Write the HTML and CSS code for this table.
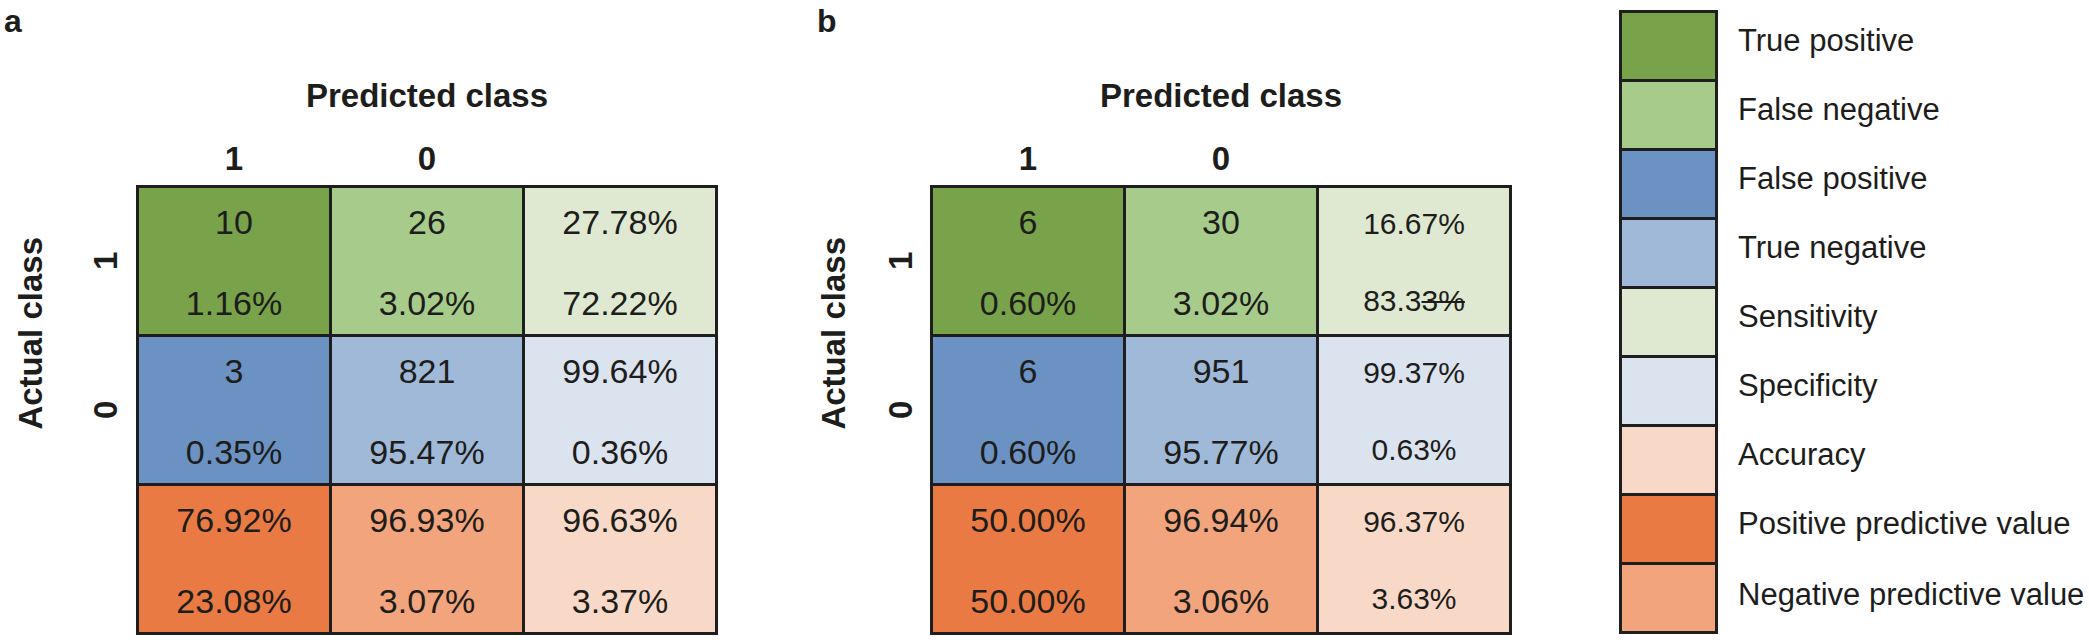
FILE: index.html
```html
<!DOCTYPE html>
<html lang="en">
<head>
<meta charset="utf-8">
<title>Confusion matrices</title>
<link rel="stylesheet" href="styles.css">
</head>
<body>
<div class="figure">
  <section class="panel panel-a">
    <div class="tag">a</div>
    <div class="chart">
      <div class="x-title">Predicted class</div>
      <div class="col-labels"><span>1</span><span>0</span><span></span></div>
      <div class="y-title"><span class="vtext">Actual class</span></div>
      <div class="row-labels"><span class="vtext">1</span><span class="vtext">0</span><span></span></div>
      <div class="matrix">
        <div class="cell tp"><span>10</span><span>1.16%</span></div>
        <div class="cell fn"><span>26</span><span>3.02%</span></div>
        <div class="cell sens"><span>27.78%</span><span>72.22%</span></div>
        <div class="cell fp"><span>3</span><span>0.35%</span></div>
        <div class="cell tn"><span>821</span><span>95.47%</span></div>
        <div class="cell spec"><span>99.64%</span><span>0.36%</span></div>
        <div class="cell ppv"><span>76.92%</span><span>23.08%</span></div>
        <div class="cell npv"><span>96.93%</span><span>3.07%</span></div>
        <div class="cell acc"><span>96.63%</span><span>3.37%</span></div>
      </div>
    </div>
  </section>

  <section class="panel panel-b">
    <div class="tag">b</div>
    <div class="chart">
      <div class="x-title">Predicted class</div>
      <div class="col-labels"><span>1</span><span>0</span><span></span></div>
      <div class="y-title"><span class="vtext">Actual class</span></div>
      <div class="row-labels"><span class="vtext">1</span><span class="vtext">0</span><span></span></div>
      <div class="matrix">
        <div class="cell tp"><span>6</span><span>0.60%</span></div>
        <div class="cell fn"><span>30</span><span>3.02%</span></div>
        <div class="cell sens small"><span>16.67%</span><span>83.3<span class="strike">3%</span></span></div>
        <div class="cell fp"><span>6</span><span>0.60%</span></div>
        <div class="cell tn"><span>951</span><span>95.77%</span></div>
        <div class="cell spec small"><span>99.37%</span><span>0.63%</span></div>
        <div class="cell ppv"><span>50.00%</span><span>50.00%</span></div>
        <div class="cell npv"><span>96.94%</span><span>3.06%</span></div>
        <div class="cell acc small"><span>96.37%</span><span>3.63%</span></div>
      </div>
    </div>
  </section>

  <aside class="legend">
    <div class="legend-item"><span class="swatch tp"></span><span class="legend-label">True positive</span></div>
    <div class="legend-item"><span class="swatch fn"></span><span class="legend-label">False negative</span></div>
    <div class="legend-item"><span class="swatch fp"></span><span class="legend-label">False positive</span></div>
    <div class="legend-item"><span class="swatch tn"></span><span class="legend-label">True negative</span></div>
    <div class="legend-item"><span class="swatch sens"></span><span class="legend-label">Sensitivity</span></div>
    <div class="legend-item"><span class="swatch spec"></span><span class="legend-label">Specificity</span></div>
    <div class="legend-item"><span class="swatch acc"></span><span class="legend-label">Accuracy</span></div>
    <div class="legend-item"><span class="swatch ppv"></span><span class="legend-label">Positive predictive value</span></div>
    <div class="legend-item last"><span class="swatch npv"></span><span class="legend-label">Negative predictive value</span></div>
  </aside>
</div>
</body>
</html>
```

FILE: styles.css
```css
html, body {
  margin: 0;
  padding: 0;
  background: #ffffff;
}

body {
  width: 2089px;
  height: 643px;
  overflow: hidden;
  font-family: "Liberation Sans", Arial, sans-serif;
  color: #1d1d1b;
}

.figure {
  display: flex;
  align-items: flex-start;
}

.panel {
  display: flex;
  flex-direction: column;
  padding-top: 5px;
}

.panel-b {
  margin-left: 99px;
}

.tag {
  font-weight: 700;
  font-size: 32px;
  line-height: 32px;
  height: 32px;
}

.panel-a .tag {
  margin-left: 4px;
}

.chart {
  display: grid;
  grid-template-columns: auto auto auto;
  grid-template-areas:
    ".  .  xt"
    ".  .  xl"
    "yt rl mx";
  margin-top: 42px;
}

.panel-a .chart {
  margin-left: 14px;
}

.x-title {
  grid-area: xt;
  font-weight: 700;
  font-size: 33px;
  line-height: 33px;
  text-align: center;
  margin-bottom: 30px;
}

.col-labels {
  grid-area: xl;
  display: grid;
  grid-template-columns: 190px 190px 190px;
  column-gap: 3px;
  padding: 0 3px;
  font-weight: 700;
  font-size: 33px;
  line-height: 33px;
  text-align: center;
  margin-bottom: 10px;
}

.vtext {
  writing-mode: vertical-rl;
  transform: rotate(180deg);
  font-weight: 700;
  font-size: 33px;
  line-height: 33px;
  white-space: nowrap;
}

.y-title {
  grid-area: yt;
  height: 297px;
  display: flex;
  align-items: center;
  justify-content: center;
}

.panel-a .y-title {
  margin-right: 42px;
}

.panel-b .y-title {
  margin-right: 34px;
}

.row-labels {
  grid-area: rl;
  display: flex;
  flex-direction: column;
  padding-top: 3px;
  row-gap: 3px;
}

.row-labels > span {
  height: 146px;
  display: flex;
  align-items: center;
  justify-content: center;
}

.row-labels > span:empty {
  width: 33px;
}

.panel-a .row-labels {
  margin-right: 14px;
}

.panel-b .row-labels {
  margin-right: 13px;
}

.matrix {
  grid-area: mx;
  display: grid;
  grid-template-columns: 190px 190px 190px;
  grid-template-rows: 146px 146px 146px;
  gap: 3px;
  padding: 3px;
  background: #1e1e1e;
}

.cell {
  display: flex;
  flex-direction: column;
  align-items: center;
  padding-top: 16px;
  row-gap: 45px;
  font-size: 34px;
  line-height: 36px;
}

.cell.small {
  font-size: 30px;
  padding-top: 18px;
  row-gap: 41px;
}

.strike {
  text-decoration: line-through;
  text-decoration-thickness: 2px;
}

.tp { background: #78a34a; }
.fn { background: #a7cb8b; }
.sens { background: #dfe9d2; }
.fp { background: #6b92c2; }
.tn { background: #a0b9d8; }
.spec { background: #dbe3ee; }
.ppv { background: #ea7a43; }
.npv { background: #f2a47c; }
.acc { background: #f8d9c7; }

.legend {
  margin-left: 107px;
  margin-top: 10px;
  display: flex;
  flex-direction: column;
}

.legend-item {
  display: flex;
  align-items: center;
  height: 69px;
}

.legend-item.last {
  height: 72px;
}

.swatch {
  box-sizing: border-box;
  width: 99px;
  height: 100%;
  border: 3px solid #1e1e1e;
  border-bottom: none;
}

.legend-item.last .swatch {
  border-bottom: 3px solid #1e1e1e;
}

.legend-label {
  margin-left: 20px;
  font-size: 31px;
  padding-bottom: 7px;
  white-space: nowrap;
}
```
